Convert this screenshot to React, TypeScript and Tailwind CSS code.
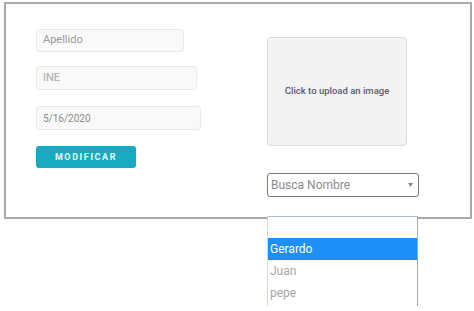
import React from "react";

export default function App() {
  const font = { fontFamily: "Roboto, 'Liberation Sans', sans-serif" };
  return (
    <div className="relative h-[311px] w-[474px] overflow-hidden bg-white" style={font}>
      <div className="ml-[4px] mt-[2px] flex h-[217px] w-[468px] border-2 border-[#a9a9a9] pl-[30px] pt-[25px]">
        <div className="flex w-[231px] flex-col">
          <div className="flex h-[23px] w-[148px] items-center rounded-[4px] border border-[#e8e8e8] bg-[#f9f9f9] pl-[6px] text-[11px] text-[#9a9a9a]">
            Apellido
          </div>
          <div className="mt-[14px] flex h-[24px] w-[161px] items-center rounded-[4px] border border-[#e8e8e8] bg-[#f9f9f9] pl-[6px] text-[11px] text-[#a8a8a8]">
            INE
          </div>
          <div className="mt-[16px] flex h-[24px] w-[165px] items-center rounded-[4px] border border-[#e8e8e8] bg-[#f9f9f9] pl-[6px] text-[10px] text-[#8a8a8a]">
            5/16/2020
          </div>
          <button className="mt-[16px] flex h-[22px] w-[100px] items-center justify-center rounded-[3px] bg-[#17aac0] pt-[1px] text-[9px] font-bold tracking-[1.6px] text-[#eafafd]">
            MODIFICAR
          </button>
        </div>
        <div className="flex flex-col">
          <div className="mt-[8px] flex h-[109px] w-[140px] items-center justify-center rounded-[4px] border border-[#dcdcdc] bg-[#f3f3f3] text-[9.5px] font-medium text-[#565c74]">
            Click to upload an image
          </div>
          <div className="mt-[27px] flex h-[24px] w-[152px] items-center justify-between rounded-[3px] border border-[#7a7a7a] bg-white pl-[3px] pr-[5px] text-[12px] text-[#8c8c8c]">
            <span>Busca Nombre</span>
            <svg width="5" height="4" viewBox="0 0 5 4">
              <path d="M0 0 L5 0 L2.5 4 Z" fill="#888" />
            </svg>
          </div>
        </div>
      </div>
      <div className="absolute left-[267px] top-[216px] flex h-[90px] w-[151px] flex-col border-t border-r border-l border-t-[#aebfd2] border-r-[#a8a8a8] border-l-[#d6d6d6] bg-white text-[12px]">
        <div className="h-[21px]" />
        <div className="flex h-[22px] items-center bg-[#1e8ff7] pl-[2px] text-white">Gerardo</div>
        <div className="flex h-[22px] items-center pl-[2px] text-[#a6a6a6]">Juan</div>
        <div className="flex h-[22px] items-center pl-[2px] text-[#a6a6a6]">pepe</div>
      </div>
    </div>
  );
}
